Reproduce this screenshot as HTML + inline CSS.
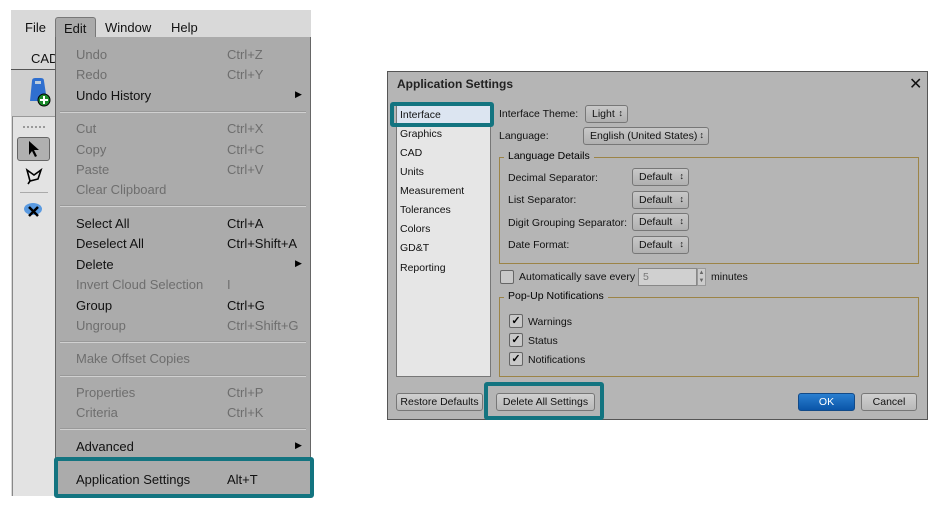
<!DOCTYPE html>
<html><head><style>
*{margin:0;padding:0;box-sizing:border-box}
body{width:947px;height:514px;background:#fff;position:relative;overflow:hidden;font-family:"Liberation Sans",sans-serif;}
.a{position:absolute;white-space:nowrap}
.m{font-size:13px;color:#111}
.d{color:#6e6e6e}
.sep{position:absolute;left:60px;width:246px;height:2px;background:#d0d0d0;border-top:1px solid #999}
.t{font-size:10.5px;color:#111}
.cb{position:absolute;height:18px;border:1px solid #777;border-radius:3px;background:linear-gradient(#c8c8c8,#b0b0b0);font-size:10.5px;padding:2px 0 0 6px;color:#111}
.cb:after{content:"\2195";position:absolute;right:4px;top:2px;font-size:9px}
.chk{position:absolute;width:14px;height:14px;border:1px solid #666;border-radius:2px;background:#c8c8c8;font-size:11px;line-height:12px;text-align:center;font-weight:bold}
.btn{position:absolute;height:18px;border:1px solid #777;border-radius:3px;background:linear-gradient(#d0d0d0,#b8b8b8);font-size:10.5px;text-align:center;line-height:16px;color:#111}
.grp{position:absolute;border:1px solid #9c8447}
.gl{position:absolute;background:#b5b5b5;padding:0 4px;font-size:10.5px;top:-8px;left:4px}
</style></head><body>
<div class="a" style="left:11px;top:10px;width:300px;height:486px;background:#d9d9d9"></div>
<div class="a m" style="left:25px;top:20px">File</div>
<div class="a" style="left:55px;top:17px;width:41px;height:22px;background:#aaa;border:1px solid #777;border-bottom:none;border-radius:3px 3px 0 0"></div>
<div class="a m" style="left:64px;top:21px">Edit</div>
<div class="a m" style="left:105px;top:20px">Window</div>
<div class="a m" style="left:171px;top:20px">Help</div>
<div class="a m" style="left:31px;top:51px">CAD</div>
<div class="a" style="left:11px;top:69px;width:45px;height:1px;background:#555"></div>
<div class="a" style="left:11px;top:70px;width:45px;height:46px;background:#cfcfcf"></div>
<svg class="a" style="left:27px;top:75px" width="26" height="32"><path d="M5 6 Q5 3 8 3 L14 3 Q17 3 17 6 L20 26 L3 26 Z" fill="#2f6fcf"/><rect x="8" y="6" width="6" height="3" fill="#bcd"/><circle cx="17" cy="25" r="6" fill="#1a8a2a" stroke="#000" stroke-width="1"/><path d="M17 21v8M13 25h8" stroke="#fff" stroke-width="2"/></svg>
<div class="a" style="left:12px;top:116px;width:44px;height:380px;background:#e3e3e3;border-left:1px solid #888;border-top:1px solid #999"></div>
<div class="a" style="left:23px;top:126px;width:22px;height:2px;border-top:2px dotted #999"></div>
<div class="a" style="left:17px;top:137px;width:33px;height:24px;border:1px solid #666;border-radius:3px;background:#b0b0b0"></div>
<svg class="a" style="left:27px;top:140px" width="14" height="18"><path d="M2 1 L2 15 L5 11 L8 17 L10 16 L7 10 L12 10 Z" fill="#000"/></svg>
<svg class="a" style="left:24px;top:166px" width="20" height="20"><path d="M3 4 L10 9 L17 4 L14 13 L6 15 Z M6 15 L4 18" fill="none" stroke="#000" stroke-width="1.6"/></svg>
<div class="a" style="left:20px;top:192px;width:28px;height:1px;background:#aaa"></div>
<svg class="a" style="left:22px;top:200px" width="24" height="20"><ellipse cx="11" cy="9" rx="9" ry="6" fill="#5a9ae0"/><path d="M7 7 L16 16 M16 7 L7 16" stroke="#000" stroke-width="2.5"/></svg>
<div class="a" style="left:55px;top:37px;width:256px;height:459px;background:#ababab;border:1px solid #666;border-top:none"></div>
<div class="a m d" style="left:76px;top:47px">Undo</div><div class="a m d" style="left:227px;top:47px">Ctrl+Z</div>
<div class="a m d" style="left:76px;top:67px">Redo</div><div class="a m d" style="left:227px;top:67px">Ctrl+Y</div>
<div class="a m" style="left:76px;top:88px">Undo History</div><div class="a" style="left:295px;top:89px;font-size:9px">▶</div>
<div class="sep" style="top:111px"></div>
<div class="a m d" style="left:76px;top:121px">Cut</div><div class="a m d" style="left:227px;top:121px">Ctrl+X</div>
<div class="a m d" style="left:76px;top:142px">Copy</div><div class="a m d" style="left:227px;top:142px">Ctrl+C</div>
<div class="a m d" style="left:76px;top:162px">Paste</div><div class="a m d" style="left:227px;top:162px">Ctrl+V</div>
<div class="a m d" style="left:76px;top:182px">Clear Clipboard</div>
<div class="sep" style="top:205px"></div>
<div class="a m" style="left:76px;top:216px">Select All</div><div class="a m" style="left:227px;top:216px">Ctrl+A</div>
<div class="a m" style="left:76px;top:236px">Deselect All</div><div class="a m" style="left:227px;top:236px">Ctrl+Shift+A</div>
<div class="a m" style="left:76px;top:257px">Delete</div><div class="a" style="left:295px;top:258px;font-size:9px">▶</div>
<div class="a m d" style="left:76px;top:277px">Invert Cloud Selection</div><div class="a m d" style="left:227px;top:277px">I</div>
<div class="a m" style="left:76px;top:298px">Group</div><div class="a m" style="left:227px;top:298px">Ctrl+G</div>
<div class="a m d" style="left:76px;top:318px">Ungroup</div><div class="a m d" style="left:227px;top:318px">Ctrl+Shift+G</div>
<div class="sep" style="top:341px"></div>
<div class="a m d" style="left:76px;top:351px">Make Offset Copies</div>
<div class="sep" style="top:375px"></div>
<div class="a m d" style="left:76px;top:385px">Properties</div><div class="a m d" style="left:227px;top:385px">Ctrl+P</div>
<div class="a m d" style="left:76px;top:405px">Criteria</div><div class="a m d" style="left:227px;top:405px">Ctrl+K</div>
<div class="sep" style="top:428px"></div>
<div class="a m" style="left:76px;top:439px">Advanced</div><div class="a" style="left:295px;top:440px;font-size:9px">▶</div>
<div class="a" style="left:54px;top:457px;width:260px;height:41px;border:4px solid #137480;border-radius:3px"></div>
<div class="a m" style="left:76px;top:472px">Application Settings</div><div class="a m" style="left:227px;top:472px">Alt+T</div>
<div class="a" style="left:387px;top:71px;width:541px;height:349px;background:#b5b5b5;border:1px solid #555"></div>
<div class="a" style="left:397px;top:77px;font-size:12px;font-weight:bold;color:#222">Application Settings</div>
<div class="a" style="left:909px;top:74px;font-size:16px;color:#111">✕</div>
<div class="a" style="left:396px;top:104px;width:95px;height:273px;background:#e6e6e6;border:1px solid #777"></div>
<div class="a" style="left:397px;top:106px;width:93px;height:19px;background:#dce5f1"></div>
<div class="a" style="left:390px;top:102px;width:104px;height:25px;border:4px solid #137480;border-radius:3px"></div>
<div class="a t" style="left:400px;top:109px">Interface</div>
<div class="a t" style="left:400px;top:128px">Graphics</div>
<div class="a t" style="left:400px;top:147px">CAD</div>
<div class="a t" style="left:400px;top:166px">Units</div>
<div class="a t" style="left:400px;top:185px">Measurement</div>
<div class="a t" style="left:400px;top:204px">Tolerances</div>
<div class="a t" style="left:400px;top:223px">Colors</div>
<div class="a t" style="left:400px;top:242px">GD&amp;T</div>
<div class="a t" style="left:400px;top:262px">Reporting</div>
<div class="a t" style="left:499px;top:108px">Interface Theme:</div>
<div class="cb" style="left:585px;top:105px;width:43px">Light</div>
<div class="a t" style="left:499px;top:130px">Language:</div>
<div class="cb" style="left:583px;top:127px;width:126px">English (United States)</div>
<div class="grp" style="left:499px;top:157px;width:420px;height:107px"><span class="gl">Language Details</span></div>
<div class="a t" style="left:508px;top:172px">Decimal Separator:</div><div class="cb" style="left:632px;top:168px;width:57px">Default</div>
<div class="a t" style="left:508px;top:194px">List Separator:</div><div class="cb" style="left:632px;top:191px;width:57px">Default</div>
<div class="a t" style="left:508px;top:217px">Digit Grouping Separator:</div><div class="cb" style="left:632px;top:213px;width:57px">Default</div>
<div class="a t" style="left:508px;top:239px">Date Format:</div><div class="cb" style="left:632px;top:236px;width:57px">Default</div>
<div class="chk" style="left:500px;top:270px"></div>
<div class="a t" style="left:519px;top:271px">Automatically save every</div>
<div class="a" style="left:638px;top:268px;width:59px;height:18px;background:#d0d0d0;border:1px solid #888;font-size:10.5px;color:#777;padding:2px 4px">5</div>
<div class="a" style="left:697px;top:268px;width:9px;height:18px;background:#ccc;border:1px solid #999;font-size:6px;line-height:8px;text-align:center;color:#666">▲<br>▼</div>
<div class="a t" style="left:711px;top:271px">minutes</div>
<div class="grp" style="left:499px;top:297px;width:420px;height:80px"><span class="gl">Pop-Up Notifications</span></div>
<div class="chk" style="left:509px;top:314px">✓</div><div class="a t" style="left:528px;top:316px">Warnings</div>
<div class="chk" style="left:509px;top:333px">✓</div><div class="a t" style="left:528px;top:335px">Status</div>
<div class="chk" style="left:509px;top:352px">✓</div><div class="a t" style="left:528px;top:354px">Notifications</div>
<div class="btn" style="left:396px;top:393px;width:87px">Restore Defaults</div>
<div class="btn" style="left:496px;top:393px;width:99px">Delete All Settings</div>
<div class="a" style="left:484px;top:382px;width:120px;height:38px;border:4px solid #137480;border-radius:3px"></div>
<div class="btn" style="left:798px;top:393px;width:57px;background:linear-gradient(#2a7fd0,#0a55a8);color:#fff;border-color:#124a88">OK</div>
<div class="btn" style="left:861px;top:393px;width:56px">Cancel</div>
</body></html>
